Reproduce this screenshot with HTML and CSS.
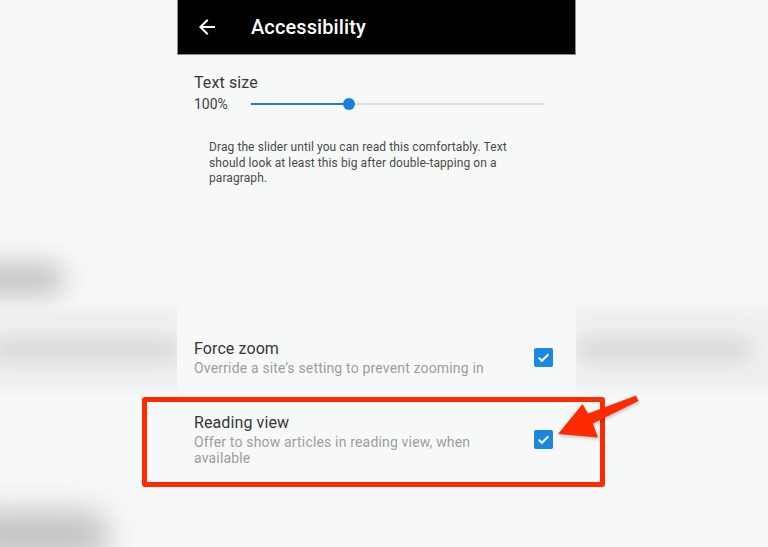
FILE: index.html
```html
<!DOCTYPE html>
<html lang="en">
<head>
<meta charset="utf-8">
<title>Accessibility</title>
<link rel="stylesheet" href="styles.css">
</head>
<body>
  <div class="backdrop" aria-hidden="true">
    <div class="blob blob-top"></div>
    <div class="band band-left"><div class="band-line"></div></div>
    <div class="band band-right"><div class="band-line"></div></div>
    <div class="blob blob-bottom"></div>
  </div>

  <main class="phone">
    <header class="appbar">
      <svg class="appbar-back" width="24" height="24" viewBox="0 0 24 24" aria-label="Back">
        <path d="M20 11H7.83l5.59-5.59L12 4l-8 8 8 8 1.41-1.41L7.83 13H20v-2z" fill="#fff"/>
      </svg>
      <h1 class="appbar-title">Accessibility</h1>
    </header>

    <section class="settings">
      <div class="textsize">
        <div class="textsize-title">Text size</div>
        <div class="textsize-row">
          <span class="textsize-value">100%</span>
          <div class="slider">
            <div class="slider-fill" style="width: 33.3%"><span class="slider-thumb"></span></div>
          </div>
        </div>
        <p class="textsize-preview">Drag the slider until you can read this comfortably. Text should look at least this big after double-tapping on a paragraph.</p>
      </div>

      <div class="pref">
        <div class="pref-text">
          <div class="pref-title">Force zoom</div>
          <div class="pref-summary">Override a site’s setting to prevent zooming in</div>
        </div>
        <span class="checkbox" role="checkbox" aria-checked="true">
          <svg width="19" height="19" viewBox="0 0 19 19"><path d="M4.6 9.6l3.3 3.2 6.5-6.6" fill="none" stroke="#fff" stroke-width="2"/></svg>
        </span>
      </div>

      <div class="pref">
        <div class="pref-text">
          <div class="pref-title">Reading view</div>
          <div class="pref-summary">Offer to show articles in reading view, when available</div>
        </div>
        <span class="checkbox" role="checkbox" aria-checked="true">
          <svg width="19" height="19" viewBox="0 0 19 19"><path d="M4.6 9.6l3.3 3.2 6.5-6.6" fill="none" stroke="#fff" stroke-width="2"/></svg>
        </span>
      </div>
    </section>
  </main>

  <div class="callout-box"></div>
  <svg class="callout-arrow" width="768" height="547" viewBox="0 0 768 547" aria-hidden="true">
    <polygon points="636,395.5 638.5,401 593,423.5 598,437.5 558,434 582.5,404 588,413.5" fill="#ff2a00"/>
  </svg>
</body>
</html>
```

FILE: styles.css
```css
* {
  box-sizing: border-box;
}

html,
body {
  margin: 0;
  padding: 0;
}

body {
  position: relative;
  width: 768px;
  height: 547px;
  overflow: hidden;
  background: #f7f9f8;
  font-family: Roboto, "Noto Sans", "Liberation Sans", sans-serif;
}

/* soft, out-of-focus content behind the phone screen */
.backdrop {
  position: absolute;
  inset: 0;
  z-index: 0;
}

.blob,
.band,
.band-line {
  position: absolute;
}

.blob-top {
  left: -40px;
  top: 264px;
  width: 105px;
  height: 30px;
  background: #bcbebd;
  border-radius: 15px;
  filter: blur(14px);
}

.blob-bottom {
  left: -40px;
  top: 510px;
  width: 150px;
  height: 50px;
  background: #c2c4c3;
  border-radius: 25px;
  filter: blur(15px);
}

.band {
  top: 308px;
  height: 82px;
  background: #eef0ef;
  filter: blur(4px);
}

.band-left {
  left: -10px;
  width: 200px;
}

.band-right {
  left: 570px;
  width: 210px;
}

.band-line {
  top: 31px;
  height: 22px;
  background: #d6d8d7;
  border-radius: 11px;
  filter: blur(9px);
}

.band-left .band-line {
  left: 0;
  width: 190px;
}

.band-right .band-line {
  left: 6px;
  width: 176px;
}

/* phone screen */
.phone {
  position: relative;
  z-index: 1;
  width: 399px;
  height: 547px;
  margin-left: 177px;
  background: #f7f9f8;
}

.appbar {
  display: flex;
  align-items: center;
  height: 55px;
  padding-left: 17px;
  background: #000;
  border: 1px solid #8c8c8c;
  border-top: none;
}

.appbar-back {
  display: block;
  flex: none;
}

.appbar-title {
  margin: 0 0 0 32px;
  color: #fff;
  font-size: 20px;
  font-weight: 500;
  line-height: 24px;
  letter-spacing: 0.1px;
}

.settings {
  padding: 18px 23px 0 17px;
}

.textsize-title {
  color: #383838;
  font-size: 16px;
  line-height: 20px;
  letter-spacing: 0.1px;
}

.textsize-row {
  display: flex;
  align-items: center;
  height: 22px;
}

.textsize-value {
  width: 57px;
  color: #3c3c3c;
  font-size: 14px;
  line-height: 22px;
}

.slider {
  flex: 1;
  height: 2px;
  margin-right: 9px;
  background: #dedfdf;
}

.slider-fill {
  position: relative;
  height: 2px;
  background: #1a7fd6;
}

.slider-thumb {
  position: absolute;
  right: -6px;
  top: -5px;
  width: 12px;
  height: 12px;
  border-radius: 50%;
  background: #1a7fd6;
}

.textsize-preview {
  width: 322px;
  margin: 25px 0 0 15px;
  color: #4a4a4a;
  font-size: 12px;
  line-height: 15.5px;
  letter-spacing: 0.09px;
}

.textsize {
  margin-bottom: 134px;
}

.pref {
  display: flex;
  align-items: center;
  padding: 18px 0 19px;
}

.pref-text {
  flex: 1;
  margin-right: 18px;
}

.pref-title {
  color: #363636;
  font-size: 16px;
  line-height: 20px;
  letter-spacing: 0.1px;
}

.pref-summary {
  margin-top: 1px;
  color: #9d9d9d;
  font-size: 14px;
  line-height: 16px;
  letter-spacing: 0.17px;
}

.checkbox {
  display: block;
  flex: none;
  width: 19px;
  height: 19px;
  border-radius: 2px;
  background: #1c87e3;
}

.checkbox svg {
  display: block;
}

/* red annotation over the screen */
.callout-box {
  position: absolute;
  z-index: 2;
  left: 142px;
  top: 397px;
  width: 463px;
  height: 90px;
  border: 5px solid #ff2a00;
  border-radius: 3px;
}

.callout-arrow {
  position: absolute;
  z-index: 3;
  left: 0;
  top: 0;
  filter: drop-shadow(1px 2px 1.5px rgba(0, 0, 0, 0.2));
}
```
